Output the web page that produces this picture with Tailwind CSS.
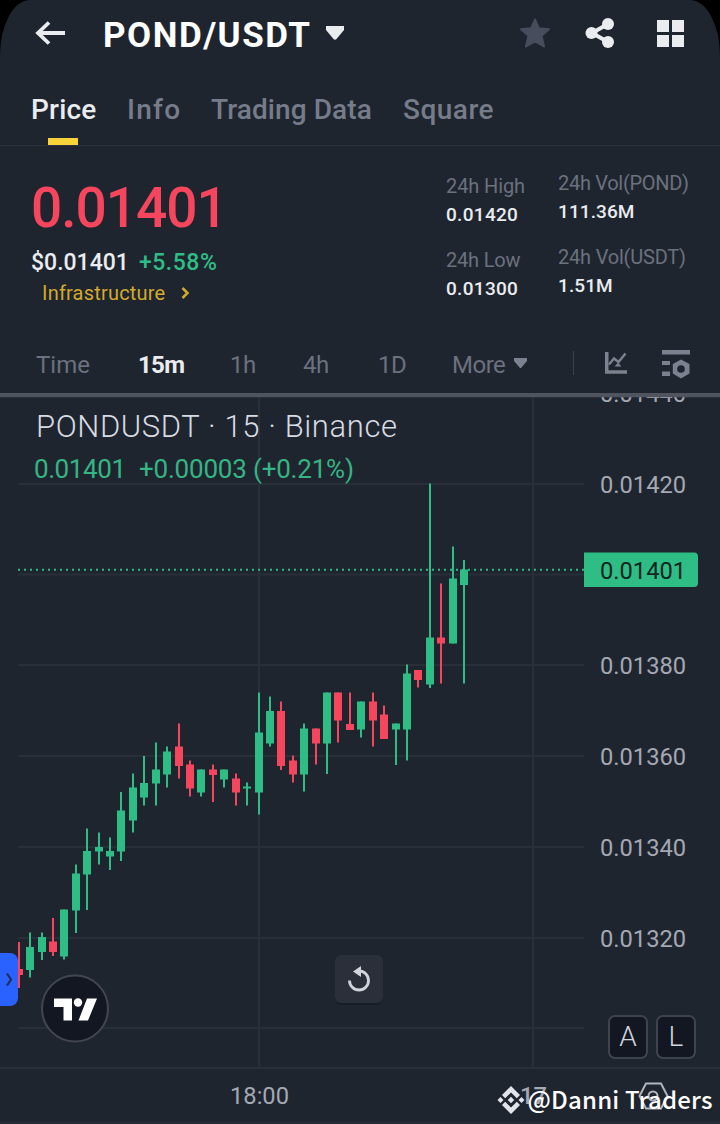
<!DOCTYPE html>
<html lang="en">
<head>
  <meta charset="UTF-8">
  <meta name="viewport" content="width=device-width, initial-scale=1.0">
  <title>POND/USDT</title>
  <script src="https://cdn.jsdelivr.net/npm/@tailwindcss/browser@4"></script>
</head>
<body class="bg-black font-['Roboto',sans-serif]">
  <div class="relative w-[720px] h-[1124px] overflow-hidden bg-[#1f252f] [border-radius:30px_30px_0_0/56px_56px_0_0]">

    <!-- Header -->
    <header class="flex items-center h-[68px] pl-[34px] pr-[36px]">
      <svg class="w-8 h-7 shrink-0" viewBox="0 0 32 28" fill="none" stroke="#eaecef" stroke-width="3.8">
        <path d="M31 13H4M15 2.500L4 13L15 23.500"/>
      </svg>
      <h1 class="ml-[37px] mt-[2px] w-[209px] text-[35px] leading-none font-bold text-white whitespace-nowrap tracking-[1.500px]">POND/USDT</h1>
      <svg class="ml-[14px] w-[18px] h-[14px] -mt-[3px]" viewBox="0 0 18 14" fill="#eaecef"><path d="M0 0H18V4L10.500 13Q9 14.500 7.500 13L0 4Z"/></svg>
      <div class="ml-auto flex items-center -mt-[2px]">
        <svg class="w-[32px] h-[32px]" viewBox="0 0 32 32" fill="#474d5c" stroke="#474d5c" stroke-width="2" stroke-linejoin="round">
          <path d="M16 2.500L19.800 11.300L30 12.200L22.500 18.800L25 29.500L16 24.300L7 29.500L9.500 18.800L2 12.200L12.200 11.300Z"/>
        </svg>
        <svg class="ml-[33px] w-[32px] h-[32px]" viewBox="0 0 32 32" fill="#eaecef" stroke="#eaecef">
          <path d="M24 7L8 16L24 25" fill="none" stroke-width="4"/>
          <circle cx="7.500" cy="16" r="6" stroke="none"/><circle cx="24" cy="7" r="6" stroke="none"/><circle cx="24" cy="25" r="6" stroke="none"/>
        </svg>
        <div class="ml-[41px] grid grid-cols-2 gap-[3px] w-[27px] h-[27px]">
          <div class="bg-[#eaecef]"></div><div class="bg-[#eaecef]"></div>
          <div class="bg-[#eaecef]"></div><div class="bg-[#eaecef]"></div>
        </div>
      </div>
    </header>

    <!-- Tabs -->
    <nav class="flex h-[78px] pl-[31px] pt-[25px] border-b border-[#2b323c] text-[28px] leading-[34px] font-medium text-[#767c8a] whitespace-nowrap">
      <div class="w-[96px] flex flex-col items-start text-[#eaecef]">
        <span class="tracking-[0.2px]">Price</span>
        <span class="ml-[17px] mt-[11px] w-[30px] h-[7px] bg-[#f8d33a]"></span>
      </div>
      <div class="w-[84px] tracking-[1.300px]">Info</div>
      <div class="w-[192px] tracking-[0.1px]">Trading Data</div>
      <div class="tracking-[0.5px]">Square</div>
    </nav>

    <!-- Ticker -->
    <section class="flex h-[184px] pl-[31px] whitespace-nowrap">
      <div class="w-[415px]">
        <div class="pt-[34px] text-[55px] leading-[56px] font-medium text-[#f6465d] tracking-[-1px]">0.01401</div>
        <div class="flex mt-[13px] text-[23px] leading-[28px] font-medium">
          <span class="w-[108px] text-[#eaecef]">$0.01401</span>
          <span class="text-[#2ebd85] tracking-[0.5px]">+5.58%</span>
        </div>
        <div class="flex items-center pl-[11px] mt-[3px] text-[20px] leading-[26px] text-[#d3a92e] tracking-[0.2px]">
          Infrastructure
          <svg class="ml-[16px] w-[9px] h-[12px]" viewBox="0 0 9 12" fill="none" stroke="#d3a92e" stroke-width="2.500"><path d="M1.500 1L6.500 6L1.500 11"/></svg>
        </div>
      </div>
      <div class="w-[111px] pt-[28px] text-[19px] leading-[24px] tracking-[0.3px]">
        <div class="text-[#6b717e] text-[20px] tracking-[-0.1px]">24h High</div>
        <div class="mt-[5px] text-[#eaecef] font-medium">0.01420</div>
        <div class="mt-[21px] text-[#6b717e] text-[20px] tracking-[-0.2px]">24h Low</div>
        <div class="mt-[5px] text-[#eaecef] font-medium">0.01300</div>
      </div>
      <div class="pt-[25px] pl-px text-[19px] leading-[24px] tracking-[0.1px]">
        <div class="text-[#6b717e] text-[20px] tracking-[-0.3px]">24h Vol(POND)</div>
        <div class="mt-[5px] text-[#eaecef] font-medium">111.36M</div>
        <div class="mt-[21px] text-[#6b717e] text-[20px] tracking-[-0.2px]">24h Vol(USDT)</div>
        <div class="mt-[5px] text-[#eaecef] font-medium">1.51M</div>
      </div>
    </section>

    <!-- Intervals -->
    <div class="flex items-center h-[63px] pl-[36px] pt-[7px] text-[24px] leading-[28px] text-[#6b717e] whitespace-nowrap">
      <div class="w-[102px]">Time</div>
      <div class="w-[92px] text-[#eaecef] font-bold tracking-[-0.7px]">15m</div>
      <div class="w-[73px] tracking-[-0.5px]">1h</div>
      <div class="w-[75px] tracking-[-0.5px]">4h</div>
      <div class="w-[74px] tracking-[-0.5px]">1D</div>
      <div class="w-[62px] tracking-[-0.5px]">More</div>
      <svg class="w-[13px] h-[11px] -mt-1" viewBox="0 0 13 11" fill="#7b818e"><path d="M0 0H13V3L7.500 9.500Q6.500 10.500 5.500 9.500L0 3Z"/></svg>
      <div class="ml-[46px] -mt-1 w-px h-[24px] bg-[#3b414c]"></div>
      <svg class="ml-[31px] -mt-1 w-[22px] h-[22px]" viewBox="0 0 22 22" fill="none" stroke="#7b818e">
        <path d="M1.750 0V20H22" stroke-width="3.500"/>
        <path d="M4 12.500L9 6.500L13.500 10L20.500 1.500" stroke-width="2.500"/>
        <path d="M9.500 14.500L13 10.500L16.500 14.500Z" fill="#7b818e" stroke="none"/>
      </svg>
      <svg class="ml-[35px] -mt-[2px] w-[28px] h-[29px]" viewBox="0 0 28 29" fill="#7b818e">
        <path d="M0 0H28V4.500H0ZM0 11H8V15H0ZM0 21.500H8V26H0Z"/>
        <path fill-rule="evenodd" d="M19 9.500L27.500 14V23.500L19 28.500L10.800 23.500V14ZM19 15.200A3.800 3.800 0 1 0 19 22.800A3.800 3.800 0 1 0 19 15.200Z"/>
      </svg>
    </div>

    <!-- Chart -->
    <svg id="chart" class="block w-[720px] h-[731px]" viewBox="0 393 720 731" font-family="Roboto, sans-serif">
      <g stroke="#292f39" stroke-width="2">
        <path d="M18 484H584M18 574.500H584M18 665H584M18 756H584M18 847H584M18 938H584M18 1028H584"/>
        <path d="M259 393V1068M533 393V1068M0 1068H720"/>
        <path d="M0 1122.500H720"/>
      </g>
      <path d="M18 569.700H584" stroke="#2ebd85" stroke-width="2" stroke-dasharray="2 4"/>
      <g id="candles"></g>

      <g font-size="23.700" fill="#a4a8b2">
        <text x="600" y="401.500">0.01440</text>
        <text x="600" y="492.500">0.01420</text>
        <text x="600" y="673.500">0.01380</text>
        <text x="600" y="764.500">0.01360</text>
        <text x="600" y="855.500">0.01340</text>
        <text x="600" y="946.500">0.01320</text>
        <text x="230" y="1103.500">18:00</text>
        <text x="520" y="1103.500" font-weight="500">17</text>
      </g>
      <path d="M0 395H720" stroke="#50545e" stroke-width="4.500"/>

      <!-- last price -->
      <path d="M584 552.500H694Q698 552.500 698 556.500V583Q698 587 694 587H584Z" fill="#2ebd85"/>
      <text x="600" y="578.500" font-size="23.700" fill="#12251f">0.01401</text>

      <text x="36" y="437" font-size="31" font-weight="300" fill="#d8dbe2" textLength="361">PONDUSDT · 15 · Binance</text>
      <g font-size="26" fill="#35b583">
        <text x="34" y="477.500" textLength="92">0.01401</text>
        <text x="139" y="477.500" textLength="215">+0.00003 (+0.21%)</text>
      </g>

      <!-- drawing toolbar handle -->
      <rect x="-8" y="953" width="26" height="53" rx="8" fill="#2962ff"/>
      <path d="M7 973.500L11 979.500L7 985.500" fill="none" stroke="#1c2c5c" stroke-width="2.200"/>

      <!-- TradingView badge -->
      <circle cx="75" cy="1008.500" r="33" fill="#131722" stroke="#434651" stroke-width="2"/>
      <path d="M54 998.500H72V1020.500H63.500V1007H54ZM87 998.500H97L88 1020.500H78.500Z" fill="#fff"/>
      <circle cx="78" cy="1002.500" r="4.200" fill="#fff"/>

      <!-- reset button -->
      <rect x="335" y="957" width="48" height="48" rx="6" fill="#181d26"/>
      <rect x="335" y="955" width="48" height="48" rx="6" fill="#2a2f3a"/>
      <path d="M349.500 980.500A9.500 9.500 0 1 0 359 971" fill="none" stroke="#d1d4dc" stroke-width="2.800"/>
      <path d="M353 971.500L361 966V977Z" fill="#d1d4dc"/>

      <!-- scale buttons -->
      <g fill="#131722" stroke="#3f434e" stroke-width="2">
        <rect x="609" y="1016" width="38" height="42" rx="6"/>
        <rect x="657" y="1016" width="38" height="42" rx="6"/>
      </g>
      <g font-size="28" font-weight="300" fill="#d1d4dc" text-anchor="middle">
        <text x="628" y="1046">A</text>
        <text x="676" y="1046">L</text>
      </g>

      <!-- axis settings -->
      <g fill="none" stroke="#b2b5be" stroke-width="2">
        <path d="M646 1083.500H661L667.500 1096L661 1108.500H646L639.500 1096Z"/>
        <circle cx="653" cy="1096" r="4.500"/>
      </g>

      <!-- watermark -->
      <g fill="#e1e4ea">
        <path d="M511 1086L520 1095L516.800 1098.200L511 1092.400L505.200 1098.200L502 1095Z"/>
        <path d="M511 1114L520 1105L516.800 1101.800L511 1107.600L505.200 1101.800L502 1105Z"/>
        <path d="M500.500 1097L503.500 1100L500.500 1103L497.500 1100ZM521.500 1097L524.500 1100L521.500 1103L518.500 1100ZM511 1096.800L514.200 1100L511 1103.200L507.800 1100Z"/>
      </g>
      <text x="527.500" y="1109" font-size="24" font-weight="500" fill="#fff" textLength="185" font-family="'Noto Sans CJK SC', sans-serif">@Danni Traders</text>
    </svg>
  </div>

  <script>
    // x, high, low, body top, body bottom, up
    const candles = [
      [19, 942, 988, 969, 975, 0], [30, 932.5, 977.5, 947, 970, 1], [42, 932.5, 960, 937, 952, 1],
      [53, 918, 956, 941.5, 952, 0], [64, 909.5, 959.5, 909.5, 956.5, 1], [76, 864.5, 933, 873.5, 910.5, 1],
      [87, 828.5, 910, 851, 874.5, 1], [99, 832.5, 864.5, 847, 851.5, 1], [110, 837.5, 870, 851, 856.5, 1],
      [121, 792, 861, 810.5, 851.5, 1], [133, 773.5, 832.5, 787.5, 820.5, 1], [144, 756, 805.5, 783, 797.5, 1],
      [156, 742.5, 805.5, 769.5, 783.5, 1], [167, 746.5, 787.5, 751.5, 774.5, 1], [179, 723.5, 778.5, 746.5, 766, 0],
      [190, 760.5, 796.5, 764.5, 788.5, 0], [201, 769.5, 796.5, 769.5, 792.5, 1], [213, 764.5, 802, 769.5, 775, 0],
      [224, 769.5, 787.5, 769.5, 779.5, 1], [236, 773.5, 805.5, 778.5, 792.5, 0], [247, 782.5, 805.5, 786.5, 788.5, 1],
      [259, 692.5, 814.5, 732.5, 792.5, 1], [270, 696.5, 746.5, 711, 743.5, 1], [281, 701.5, 770, 711, 766, 0],
      [293, 755.5, 782.5, 760.5, 774.5, 0], [304, 723.5, 791.5, 728.5, 774.5, 1], [316, 728.5, 764.5, 728.5, 743.5, 0],
      [327, 692.5, 774, 692.5, 743.5, 1], [338, 692.5, 742.5, 692.5, 720.5, 0], [350, 692.5, 730, 724, 730, 0],
      [361, 701.5, 737.5, 701.5, 729.5, 1], [373, 692.5, 746.5, 701.5, 720.5, 0], [384, 705.5, 739, 714.5, 739, 0],
      [396, 723.5, 765, 723.5, 729.5, 1], [407, 664.5, 760.5, 673.5, 729.5, 1], [418, 670, 687.5, 670, 680, 0],
      [430, 483.5, 688, 637.5, 684.5, 1], [441, 583.5, 683.5, 637.5, 643.5, 0], [453, 546.5, 643.5, 578.5, 643.5, 1],
      [464, 560, 683.5, 569.5, 585, 1],
    ];

    document.getElementById('candles').innerHTML = candles.map(([x, high, low, top, bottom, up]) => {
      const left = Math.max(18, x - 4);
      return `<g fill="${up ? '#2ebd85' : '#f6465d'}">
        <rect x="${x - 1}" y="${high}" width="2" height="${low - high}"/>
        <rect x="${left}" y="${top}" width="${x + 4 - left}" height="${bottom - top}"/>
      </g>`;
    }).join('');
  </script>
</body>
</html>
